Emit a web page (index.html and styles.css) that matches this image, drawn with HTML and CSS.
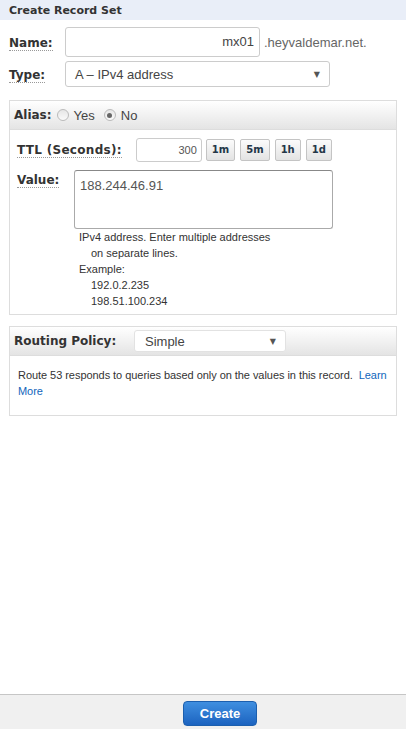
FILE: index.html
```html
<!DOCTYPE html>
<html>
<head>
<meta charset="utf-8">
<link rel="stylesheet" href="styles.css">
</head>
<body>
<div class="page">
  <div class="titlebar">Create Record Set</div>
  <div class="content">
    <div class="row name-row">
      <span class="lbl-cell"><span class="lbl">Name:</span></span>
      <div class="input name-input">mx01</div>
      <span class="suffix">.heyvaldemar.net.</span>
    </div>
    <div class="row type-row">
      <span class="lbl-cell"><span class="lbl">Type:</span></span>
      <div class="select type-select"><span>A – IPv4 address</span><span class="arrow">▼</span></div>
    </div>

    <div class="panel alias-panel">
      <div class="panel-head">
        <span class="lbl">Alias:</span>
        <span class="radio"></span><span class="radio-text">Yes</span>
        <span class="radio checked"></span><span class="radio-text">No</span>
      </div>
      <div class="panel-body alias-body">
        <div class="ttl-row">
          <span class="lbl ttl-lbl">TTL (Seconds):</span>
          <div class="input ttl-input">300</div>
          <div class="tbtns">
            <span class="tbtn">1m</span><span class="tbtn">5m</span><span class="tbtn">1h</span><span class="tbtn">1d</span>
          </div>
        </div>
        <div class="value-row">
          <span class="value-lbl-cell"><span class="lbl">Value:</span></span>
          <div class="value-col">
            <div class="textarea">188.244.46.91</div>
            <div class="help">
              <div>IPv4 address. Enter multiple addresses</div>
              <div class="ind">on separate lines.</div>
              <div>Example:</div>
              <div class="ind">192.0.2.235</div>
              <div class="ind">198.51.100.234</div>
            </div>
          </div>
        </div>
      </div>
    </div>

    <div class="panel routing-panel">
      <div class="panel-head routing-head">
        <span class="lbl nodot routing-lbl">Routing Policy:</span>
        <div class="select routing-select"><span>Simple</span><span class="arrow">▼</span></div>
      </div>
      <div class="panel-body routing-body">
        Route 53 responds to queries based only on the values in this record.&nbsp; <a class="link">Learn</a> <a class="link">More</a>
      </div>
    </div>
  </div>
  <div class="spacer"></div>
  <div class="footer">
    <span class="create-btn">Create</span>
  </div>
</div>
</body>
</html>
```

FILE: styles.css
```css
* { box-sizing: border-box; }
html, body { margin: 0; padding: 0; background: #fff; }
body { font-family: "Liberation Sans", Arial, sans-serif; color: #333; }
.page { display: flex; flex-direction: column; height: 729px; width: 406px; }

.titlebar {
  height: 20px;
  background: #e9eef8;
  padding-left: 9px;
  font-family: "DejaVu Sans", Verdana, sans-serif;
  font-weight: bold;
  font-size: 11px;
  line-height: 21px;
  color: #333;
}

.content { padding: 7px 9px 0 9px; }

.row { display: flex; align-items: center; }
.lbl-cell { width: 56px; flex: none; }
.lbl {
  font-family: "DejaVu Sans", Verdana, sans-serif;
  font-weight: bold;
  font-size: 12px;
  color: #333;
  border-bottom: 1px dotted #999;
}
.lbl.nodot { border-bottom: none; }

.input {
  border: 1px solid #ccc;
  border-radius: 3px;
  background: #fff;
  text-align: right;
  color: #444;
}
.name-input {
  width: 195px; height: 30px;
  font-size: 13px; line-height: 28px;
  padding-right: 5px;
}
.suffix { margin-left: 4px; font-size: 13px; color: #666; }

.type-row { margin-top: 4px; }
.select {
  display: flex; justify-content: space-between; align-items: center;
  border: 1px solid #ccc;
  border-radius: 3px;
  background: #fff;
  color: #444;
  font-size: 13px;
}
.type-select { width: 265px; height: 26px; padding: 0 9px 0 9px; }
.arrow { font-size: 8px; color: #555; font-family: "DejaVu Sans", sans-serif; }

.panel {
  border: 1px solid #ddd;
  background: #fff;
}
.alias-panel { margin-top: 13px; }
.panel-head {
  height: 29px;
  display: flex; align-items: center;
  padding-left: 4px;
  background: linear-gradient(#ffffff, #e4e4e4);
  border-bottom: 1px solid #ddd;
}
.panel-head .lbl { border-bottom: none; }
.radio {
  width: 12px; height: 12px;
  border-radius: 50%;
  border: 1px solid #bbb;
  background: linear-gradient(#e6e6e6, #fafafa);
  margin-left: 5px;
  position: relative;
}
.radio + .radio-text { margin-left: 5px; font-size: 13px; color: #444; }
.radio.checked { margin-left: 9px; }
.radio.checked::after {
  content: ""; position: absolute;
  left: 2.5px; top: 2.5px; width: 5px; height: 5px;
  border-radius: 50%; background: #666;
}

.alias-body { padding: 8px 0 5px 7px; }
.ttl-row { display: flex; align-items: center; }
.ttl-lbl { flex: none; border-bottom: 1px dotted #999; letter-spacing: 0.3px; }
.ttl-input {
  margin-left: 14px;
  width: 66px; height: 24px;
  font-size: 11px; line-height: 22px;
  padding-right: 4px;
  color: #555;
}
.tbtns { display: flex; gap: 5px; margin-left: 4px; }
.tbtn {
  height: 22px; min-width: 26px;
  padding: 0 5px;
  border: 1px solid #c4c4c4;
  border-radius: 2px;
  background: linear-gradient(#fbfbfb, #e3e3e3);
  font-family: "DejaVu Sans", Verdana, sans-serif;
  font-weight: bold;
  font-size: 10px;
  line-height: 20px;
  color: #233648;
  text-align: center;
}

.value-row { display: flex; margin-top: 8px; }
.value-lbl-cell { width: 57px; flex: none; padding-top: 2px; line-height: 14px; }
.textarea {
  width: 259px; height: 59px;
  border: 1px solid #aaa;
  border-top-color: #888;
  border-radius: 3px;
  padding: 8px 0 0 5px;
  font-size: 13px; color: #555;
  line-height: 14px;
}
.help {
  padding-left: 5px;
  font-size: 11px;
  line-height: 16px;
  color: #333;
}
.help .ind { padding-left: 12px; }

.routing-panel { margin-top: 11px; }
.routing-head { height: 29px; padding-left: 4px; }
.routing-lbl { width: 120px; flex: none; }
.routing-select {
  width: 152px; height: 22px;
  padding: 0 9px 0 10px;
  border-color: #e2e2e2;
  font-size: 13px;
}
.routing-body {
  padding: 11px 0 16px 8px;
  font-size: 11px;
  line-height: 16px;
  color: #333;
  letter-spacing: -0.05px;
}
.link { color: #1166bb; text-decoration: none; }

.spacer { flex: 1; }
.footer {
  height: 35px;
  border-top: 1px solid #c6c6c6;
  background: #f0f0f0;
  padding: 6px 0 0 183px;
}
.create-btn {
  display: inline-block;
  width: 74px; height: 25px;
  border: 1px solid #1c5fae;
  border-radius: 4px;
  background: linear-gradient(#3f8fe0, #1c63c0);
  color: #fff;
  font-weight: bold;
  font-size: 13px;
  line-height: 23px;
  text-align: center;
}
```
